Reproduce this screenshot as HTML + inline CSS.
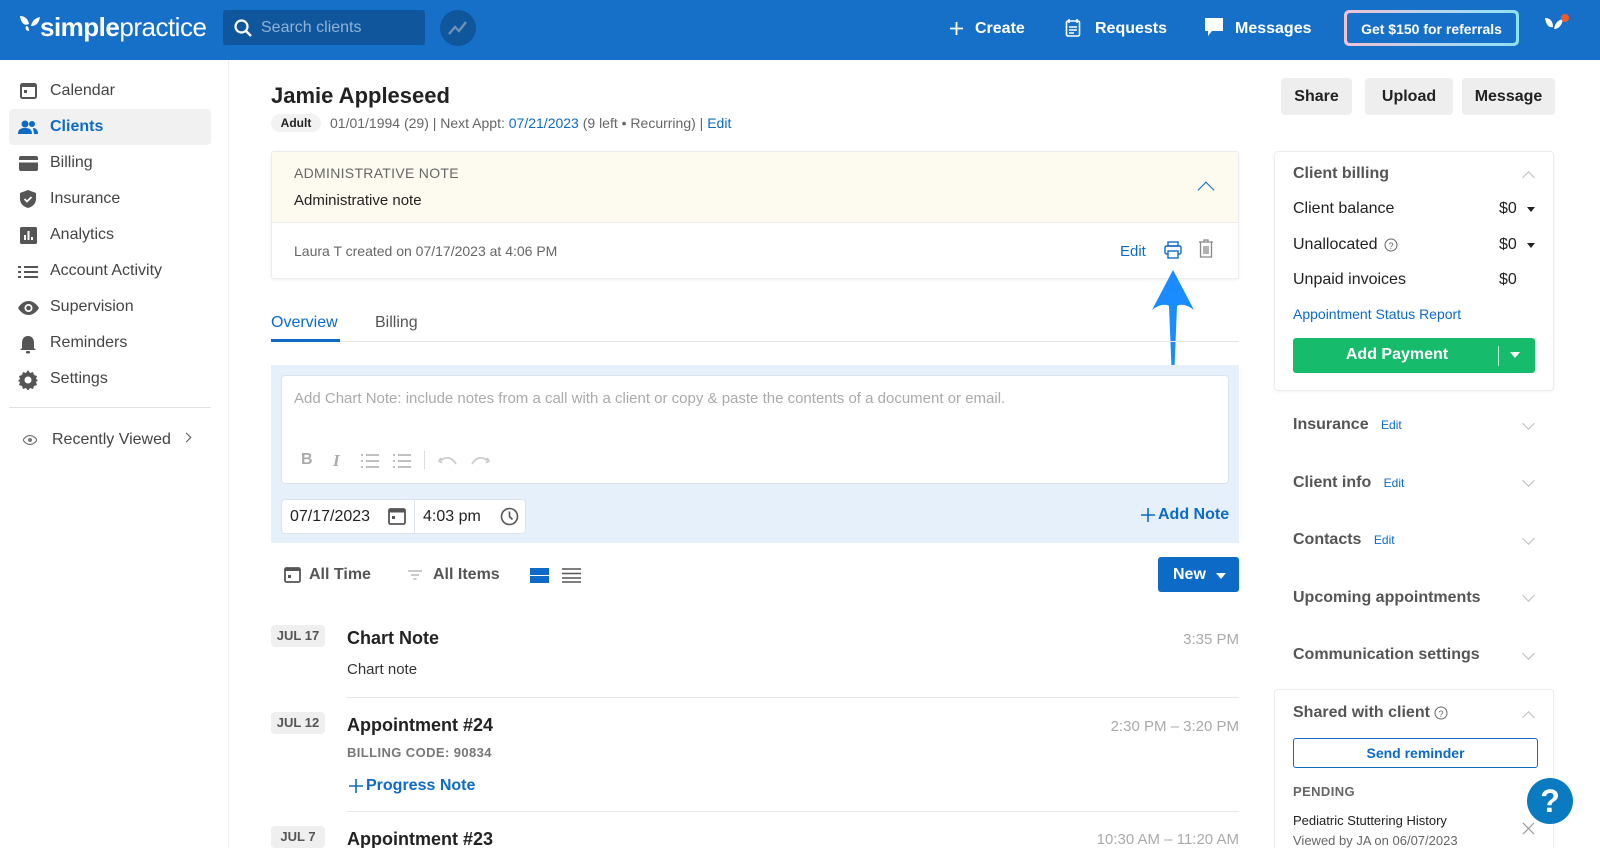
<!DOCTYPE html>
<html style="overflow:hidden;height:848px"><head><meta charset="utf-8"><style>
*{box-sizing:border-box;margin:0;padding:0}
body{width:1600px;height:848px;overflow:hidden;background:#fff;font-family:"Liberation Sans",sans-serif;color:#222;position:relative}
.a{position:absolute;white-space:nowrap}
.hdr{position:absolute;left:0;top:0;width:1600px;height:60px;background:#1670c7}
.w{color:#fff;font-weight:bold;font-size:16px}
.side{color:#444;font-size:16px}
.blue{color:#0d6bc7}
.btn{position:absolute;background:#eee;border-radius:4px;font-weight:bold;font-size:16px;color:#222;text-align:center;line-height:37px}
.rt{font-size:16px;font-weight:bold;color:#555}
.chev{position:absolute;width:9px;height:9px;border-right:1.5px solid #bbb;border-bottom:1.5px solid #bbb;transform:rotate(45deg)}
.chevu{position:absolute;width:9px;height:9px;border-left:1.5px solid #bbb;border-top:1.5px solid #bbb;transform:rotate(45deg)}
.badge{position:absolute;background:#efefef;border-radius:4px;color:#555;font-weight:bold;font-size:13px;text-align:center;line-height:22px;width:54px}
</style></head><body>
<div class="hdr"></div>
<svg class="a" style="left:18px;top:14px" width="24" height="20" viewBox="0 0 24 20"><path d="M2 2c5 0 8 3 9 8-4 2-8 0-9-8zM13 12c1-5 4-8 9-9-1 6-4 9-9 9z" fill="#fff"/><path d="M8 12c2 0 3 2 3 5-3 0-4-2-3-5z" fill="#fff"/></svg>
<div class="a" style="left:40px;top:12px;font-size:26px;color:#fff;letter-spacing:-0.5px"><b>simple</b>practice</div>
<div class="a" style="left:223px;top:10px;width:202px;height:35px;background:#0f569c;border-radius:3px"></div>
<svg class="a" style="left:234px;top:19px" width="18" height="18" viewBox="0 0 18 18"><circle cx="7.5" cy="7.5" r="6" fill="none" stroke="#fff" stroke-width="2.2"/><path d="M12 12l5 5" stroke="#fff" stroke-width="2.4"/></svg>
<div class="a" style="left:261px;top:19px;font-size:16px;color:#8fb2d6">Search clients</div>
<div class="a" style="left:440px;top:10px;width:36px;height:36px;border-radius:50%;background:#0f569c"></div>
<svg class="a" style="left:447px;top:18px" width="22" height="20"><path d="M2 16l6-7 4 4 7-9" fill="none" stroke="#6d92ba" stroke-width="2.4"/></svg>
<svg class="a" style="left:950px;top:22px" width="13" height="13"><path d="M6.5 0v13M0 6.5h13" stroke="#fff" stroke-width="1.8"/></svg>
<div class="a w" style="left:975px;top:20px">Create</div>
<svg class="a" style="left:1065px;top:18px" width="16" height="19"><rect x="1.5" y="3" width="13" height="15" rx="1.5" fill="none" stroke="#fff" stroke-width="1.6"/><path d="M4 1v4M12 1v4M4 9h8M4 12h8M4 15h5" stroke="#fff" stroke-width="1.5"/></svg>
<div class="a w" style="left:1095px;top:20px">Requests</div>
<svg class="a" style="left:1204px;top:17px" width="20" height="21"><path d="M1 1h18v13H8l-4 5v-5H1z" fill="#fff"/></svg>
<div class="a w" style="left:1235px;top:20px">Messages</div>
<div class="a" style="left:1344px;top:10px;width:175px;height:36px;border-radius:5px;background:linear-gradient(90deg,#f3c2cf,#b9d4ef,#8fe0f0)"></div>
<div class="a" style="left:1347px;top:13px;width:169px;height:30px;border-radius:3px;background:#1670c7"></div>
<div class="a" style="left:1344px;top:21px;width:175px;text-align:center;color:#fff;font-weight:bold;font-size:14px">Get $150 for referrals</div>
<svg class="a" style="left:1543px;top:14px" width="26" height="22"><path d="M2 4c5 0 8 3 8 9-4 1-7-2-8-9zM11 15c1-6 4-9 9-10-1 6-4 10-9 10z" fill="#fff"/><circle cx="22" cy="4" r="4" fill="#ef5a2a"/></svg>

<div class="a" style="left:228px;top:60px;width:1px;height:788px;background:#eceef0"></div>
<div class="a" style="left:9px;top:109px;width:202px;height:36px;background:#f1f1f1;border-radius:4px"></div>
<svg class="a" style="left:20px;top:83px" width="17" height="16"><rect x="1" y="1" width="15" height="14" rx="1.5" fill="none" stroke="#555" stroke-width="2"/><rect x="1" y="1" width="15" height="3" fill="#555"/><rect x="4" y="7" width="3" height="3" fill="#555"/></svg>
<div class="a side" style="left:50px;top:82px">Calendar</div>
<svg class="a" style="left:18px;top:120px" width="20" height="14"><circle cx="7" cy="4" r="3.5" fill="#0d6bc7"/><path d="M0 14c0-5 3-6 7-6s7 1 7 6z" fill="#0d6bc7"/><circle cx="14" cy="4" r="3" fill="#0d6bc7"/><path d="M15 8c3 0 5 2 5 6h-4z" fill="#0d6bc7"/></svg>
<div class="a side" style="left:50px;top:118px;color:#0d6bc7;font-weight:bold">Clients</div>
<svg class="a" style="left:19px;top:156px" width="19" height="15"><rect x="0" y="0" width="19" height="15" rx="2" fill="#555"/><rect x="0" y="4" width="19" height="2.5" fill="#fff"/></svg>
<div class="a side" style="left:50px;top:154px">Billing</div>
<svg class="a" style="left:20px;top:190px" width="16" height="18"><path d="M8 0l8 3v6c0 5-4 8-8 9-4-1-8-4-8-9V3z" fill="#555"/><path d="M4.5 9l2.5 2.5 4.5-4.5" stroke="#fff" stroke-width="1.8" fill="none"/></svg>
<div class="a side" style="left:50px;top:190px">Insurance</div>
<svg class="a" style="left:20px;top:227px" width="17" height="17"><rect width="17" height="17" rx="1.5" fill="#555"/><path d="M5 13V8M8.5 13V4M12 13v-3" stroke="#fff" stroke-width="2"/></svg>
<div class="a side" style="left:50px;top:226px">Analytics</div>
<svg class="a" style="left:18px;top:266px" width="20" height="12"><path d="M0 1h3M0 6h3M0 11h3M6 1h14M6 6h14M6 11h14" stroke="#555" stroke-width="2"/></svg>
<div class="a side" style="left:50px;top:262px">Account Activity</div>
<svg class="a" style="left:18px;top:301px" width="21" height="14"><path d="M0 7c3-5 7-7 10.5-7S18 2 21 7c-3 5-7 7-10.5 7S3 12 0 7z" fill="#555"/><circle cx="10.5" cy="7" r="4" fill="#fff"/><circle cx="10.5" cy="7" r="2.3" fill="#555"/></svg>
<div class="a side" style="left:50px;top:298px">Supervision</div>
<svg class="a" style="left:20px;top:335px" width="16" height="19"><path d="M8 1c4 0 6 3 6 7v5l2 2H0l2-2V8c0-4 2-7 6-7z" fill="#555"/><rect x="6" y="16" width="4" height="2.5" rx="1" fill="#555"/></svg>
<div class="a side" style="left:50px;top:334px">Reminders</div>
<svg class="a" style="left:18px;top:370px" width="20" height="20" viewBox="0 0 20 20"><path d="M10 0l2 3 3-1 1 3 3 1-1 3 2 1-2 2 1 3-3 1-1 3-3-1-2 3-2-3-3 1-1-3-3-1 1-3-2-1 2-2-1-3 3-1 1-3 3 1z" fill="#555"/><circle cx="10" cy="10" r="3.5" fill="#fff"/></svg>
<div class="a side" style="left:50px;top:370px">Settings</div>
<div class="a" style="left:9px;top:407px;width:202px;height:1px;background:#e2e2e2"></div>
<svg class="a" style="left:23px;top:435px" width="14" height="10"><path d="M0 5c2-3 4.5-4.5 7-4.5S12 2 14 5c-2 3-4.5 4.5-7 4.5S2 8 0 5z" fill="none" stroke="#777" stroke-width="1.2"/><circle cx="7" cy="5" r="2" fill="#777"/></svg>
<div class="a side" style="left:52px;top:431px">Recently Viewed</div>
<div class="a" style="left:183px;top:434px;width:7px;height:7px;border-right:1.5px solid #555;border-top:1.5px solid #555;transform:rotate(45deg)"></div>

<div class="a" style="left:271px;top:83px;font-size:22px;font-weight:bold;color:#222">Jamie Appleseed</div>
<div class="a" style="left:271px;top:114px;width:50px;height:18px;border-radius:9px;background:#f2f2f2;font-size:12px;font-weight:bold;text-align:center;line-height:18px">Adult</div>
<div class="a" style="left:330px;top:115px;font-size:14px;color:#666">01/01/1994 (29) | Next Appt: <span class="blue">07/21/2023</span> (9 left • Recurring) | <span class="blue">Edit</span></div>
<div class="btn" style="left:1281px;top:78px;width:71px">Share</div>
<div class="btn" style="left:1365px;top:78px;width:88px">Upload</div>
<div class="btn" style="left:1462px;top:78px;width:93px">Message</div>

<div class="a" style="left:271px;top:151px;width:968px;height:128px;border:1px solid #ececec;border-radius:3px;box-shadow:0 1px 3px rgba(0,0,0,.06)"></div>
<div class="a" style="left:272px;top:152px;width:966px;height:71px;background:#fdfaf0;border-bottom:1px solid #ececec"></div>
<div class="a" style="left:294px;top:165px;font-size:14px;color:#666;letter-spacing:.3px">ADMINISTRATIVE NOTE</div>
<div class="a" style="left:294px;top:192px;font-size:15px;color:#222">Administrative note</div>
<div class="a" style="left:1200px;top:184px;width:12px;height:12px;border-left:1.5px solid #0d6bc7;border-top:1.5px solid #0d6bc7;transform:rotate(45deg)"></div>
<div class="a" style="left:294px;top:243px;font-size:14px;color:#666">Laura T created on 07/17/2023 at 4:06 PM</div>
<div class="a blue" style="left:1120px;top:243px;font-size:15px">Edit</div>
<svg class="a" style="left:1164px;top:241px" width="18" height="18"><rect x="4" y="1" width="10" height="4" fill="none" stroke="#0d6bc7" stroke-width="1.4"/><rect x="1" y="5" width="16" height="8" rx="1.5" fill="none" stroke="#0d6bc7" stroke-width="1.4"/><rect x="4" y="10" width="10" height="7" fill="#fff" stroke="#0d6bc7" stroke-width="1.4"/></svg>
<svg class="a" style="left:1198px;top:239px" width="16" height="19"><path d="M1 3h14M6 3V1h4v2M2.5 3v15h11V3M6 7v8M8 7v8M10 7v8" fill="none" stroke="#888" stroke-width="1.3"/></svg>

<svg class="a" style="left:1150px;top:268px" width="46" height="115"><path d="M23 2L44 42C36 36 30 36 27 38L24 112h-2L19 38C16 36 10 36 2 42z" fill="#1a8cff"/></svg>

<div class="a" style="left:271px;top:314px;font-size:16px;color:#0d6bc7">Overview</div>
<div class="a" style="left:375px;top:314px;font-size:16px;color:#555">Billing</div>
<div class="a" style="left:271px;top:341px;width:968px;height:1px;background:#e6e6e6"></div>
<div class="a" style="left:271px;top:339px;width:69px;height:3px;background:#0d6bc7"></div>

<div class="a" style="left:271px;top:365px;width:968px;height:178px;background:#e6f0fa"></div>
<div class="a" style="left:281px;top:375px;width:948px;height:109px;background:#fff;border:1px solid #dde3ea;border-radius:4px"></div>
<div class="a" style="left:294px;top:390px;font-size:15px;color:#aaa">Add Chart Note: include notes from a call with a client or copy &amp; paste the contents of a document or email.</div>
<div class="a" style="left:301px;top:451px;font-size:16px;color:#aaa;font-weight:bold">B</div>
<div class="a" style="left:333px;top:451px;font-size:17px;color:#aaa;font-style:italic;font-weight:bold;font-family:'Liberation Serif',serif">I</div>
<svg class="a" style="left:361px;top:454px" width="18" height="14"><path d="M0 1h2M0 7h2M0 13h2M5 1h13M5 7h13M5 13h13" stroke="#aaa" stroke-width="1.6"/></svg>
<svg class="a" style="left:393px;top:454px" width="18" height="14"><path d="M5 1h13M5 7h13M5 13h13M0 1h2M0 7h2M0 13h2" stroke="#aaa" stroke-width="1.4"/></svg>
<div class="a" style="left:424px;top:451px;width:1px;height:18px;background:#ddd"></div>
<svg class="a" style="left:438px;top:455px" width="52" height="12"><path d="M3 3l-2 3 3 2M2 6c6-5 12-4 16 3" fill="none" stroke="#ccc" stroke-width="1.8"/><path d="M49 3l2 3-3 2M50 6c-6-5-12-4-16 3" fill="none" stroke="#ccc" stroke-width="1.8"/></svg>
<div class="a" style="left:281px;top:499px;width:245px;height:35px;background:#fff;border:1px solid #dde3ea;border-radius:4px"></div>
<div class="a" style="left:414px;top:499px;width:1px;height:35px;background:#dde3ea"></div>
<div class="a" style="left:290px;top:508px;font-size:16px">07/17/2023</div>
<svg class="a" style="left:388px;top:508px" width="18" height="17"><rect x="1" y="1" width="16" height="15" rx="1.5" fill="none" stroke="#555" stroke-width="1.8"/><rect x="1" y="1" width="16" height="3.5" fill="#555"/><rect x="4" y="8" width="3" height="3" fill="#555"/></svg>
<div class="a" style="left:423px;top:508px;font-size:16px">4:03 pm</div>
<svg class="a" style="left:500px;top:507px" width="19" height="19"><circle cx="9.5" cy="9.5" r="8" fill="none" stroke="#555" stroke-width="1.6"/><path d="M9.5 4.5v5l3 3" fill="none" stroke="#555" stroke-width="1.6"/></svg>
<svg class="a" style="left:1141px;top:508px" width="14" height="14"><path d="M7 0v14M0 7h14" stroke="#0d6bc7" stroke-width="1.6"/></svg>
<div class="a blue" style="left:1158px;top:506px;font-size:16px;font-weight:bold">Add Note</div>

<svg class="a" style="left:284px;top:567px" width="17" height="16"><rect x="1" y="1" width="15" height="14" rx="1.5" fill="none" stroke="#555" stroke-width="1.8"/><rect x="1" y="1" width="15" height="3" fill="#555"/><rect x="4" y="8" width="3" height="3" fill="#555"/></svg>
<div class="a" style="left:309px;top:566px;font-size:16px;font-weight:bold;color:#555">All Time</div>
<svg class="a" style="left:408px;top:570px" width="14" height="10"><path d="M0 1h14M3 5h8M5.5 9h3" stroke="#aaa" stroke-width="1.3"/></svg>
<div class="a" style="left:433px;top:566px;font-size:16px;font-weight:bold;color:#555">All Items</div>
<div class="a" style="left:530px;top:568px;width:19px;height:7px;background:#0d6bc7"></div>
<div class="a" style="left:530px;top:576px;width:19px;height:7px;background:#0d6bc7"></div>
<svg class="a" style="left:562px;top:568px" width="19" height="15"><path d="M0 1h19M0 5.5h19M0 10h19M0 14h19" stroke="#555" stroke-width="1.5"/></svg>
<div class="a" style="left:1158px;top:557px;width:81px;height:35px;background:#0d6bc7;border-radius:3px"></div>
<div class="a" style="left:1173px;top:566px;font-size:16px;font-weight:bold;color:#fff">New</div>
<div class="a" style="left:1216px;top:573px;border:5px solid transparent;border-top:6px solid #fff"></div>

<div class="badge" style="left:271px;top:625px">JUL 17</div>
<div class="a" style="left:347px;top:628px;font-size:18px;font-weight:bold;color:#222">Chart Note</div>
<div class="a" style="left:347px;top:661px;font-size:15px;color:#333">Chart note</div>
<div class="a" style="right:361px;top:631px;font-size:15px;color:#aaa">3:35 PM</div>
<div class="a" style="left:347px;top:697px;width:892px;height:1px;background:#e8e8e8"></div>
<div class="badge" style="left:271px;top:712px">JUL 12</div>
<div class="a" style="left:347px;top:715px;font-size:18px;font-weight:bold;color:#222">Appointment #24</div>
<div class="a" style="left:347px;top:745px;font-size:13px;font-weight:bold;color:#777;letter-spacing:.4px">BILLING CODE: 90834</div>
<svg class="a" style="left:349px;top:779px" width="14" height="14"><path d="M7 0v14M0 7h14" stroke="#0d6bc7" stroke-width="1.6"/></svg>
<div class="a blue" style="left:366px;top:777px;font-size:16px;font-weight:bold">Progress Note</div>
<div class="a" style="right:361px;top:718px;font-size:15px;color:#aaa">2:30 PM – 3:20 PM</div>
<div class="a" style="left:347px;top:811px;width:892px;height:1px;background:#e8e8e8"></div>
<div class="badge" style="left:271px;top:826px">JUL 7</div>
<div class="a" style="left:347px;top:829px;font-size:18px;font-weight:bold;color:#222">Appointment #23</div>
<div class="a" style="right:361px;top:831px;font-size:15px;color:#aaa">10:30 AM – 11:20 AM</div>

<div class="a" style="left:1274px;top:151px;width:280px;height:240px;border:1px solid #ececec;border-radius:4px;box-shadow:0 1px 3px rgba(0,0,0,.05)"></div>
<div class="a rt" style="left:1293px;top:165px">Client billing</div>
<div class="chevu" style="left:1524px;top:173px"></div>
<div class="a" style="left:1293px;top:200px;font-size:16px">Client balance</div>
<div class="a" style="left:1499px;top:200px;font-size:16px">$0</div>
<div class="a" style="left:1527px;top:207px;border:4.5px solid transparent;border-top:5px solid #222"></div>
<div class="a" style="left:1293px;top:236px;font-size:16px">Unallocated</div>
<svg class="a" style="left:1384px;top:238px" width="14" height="14"><circle cx="7" cy="7" r="6" fill="none" stroke="#666" stroke-width="1"/><text x="7" y="11" font-size="9" text-anchor="middle" fill="#666" font-family="Liberation Sans">?</text></svg>
<div class="a" style="left:1499px;top:236px;font-size:16px">$0</div>
<div class="a" style="left:1527px;top:243px;border:4.5px solid transparent;border-top:5px solid #222"></div>
<div class="a" style="left:1293px;top:271px;font-size:16px">Unpaid invoices</div>
<div class="a" style="left:1499px;top:271px;font-size:16px">$0</div>
<div class="a blue" style="left:1293px;top:306px;font-size:14px">Appointment Status Report</div>
<div class="a" style="left:1293px;top:338px;width:242px;height:35px;background:#16bb6b;border-radius:3px"></div>
<div class="a" style="left:1293px;top:346px;width:208px;text-align:center;font-size:16px;font-weight:bold;color:#fff">Add Payment</div>
<div class="a" style="left:1498px;top:346px;width:1px;height:20px;background:#bfeed6"></div>
<div class="a" style="left:1510px;top:352px;border:5px solid transparent;border-top:6px solid #fff"></div>

<div class="a rt" style="left:1293px;top:416px">Insurance <span class="blue" style="font-size:12px;font-weight:normal;margin-left:8px">Edit</span></div>
<div class="chev" style="left:1524px;top:419px"></div>
<div class="a rt" style="left:1293px;top:474px">Client info <span class="blue" style="font-size:12px;font-weight:normal;margin-left:8px">Edit</span></div>
<div class="chev" style="left:1524px;top:476px"></div>
<div class="a rt" style="left:1293px;top:531px">Contacts <span class="blue" style="font-size:12px;font-weight:normal;margin-left:8px">Edit</span></div>
<div class="chev" style="left:1524px;top:534px"></div>
<div class="a rt" style="left:1293px;top:589px">Upcoming appointments</div>
<div class="chev" style="left:1524px;top:591px"></div>
<div class="a rt" style="left:1293px;top:646px">Communication settings</div>
<div class="chev" style="left:1524px;top:649px"></div>

<div class="a" style="left:1274px;top:689px;width:280px;height:159px;border:1px solid #ececec;border-bottom:none;border-radius:4px 4px 0 0"></div>
<div class="a rt" style="left:1293px;top:704px">Shared with client</div>
<svg class="a" style="left:1434px;top:706px" width="14" height="14"><circle cx="7" cy="7" r="6" fill="none" stroke="#666" stroke-width="1"/><text x="7" y="11" font-size="9" text-anchor="middle" fill="#666" font-family="Liberation Sans">?</text></svg>
<div class="chevu" style="left:1524px;top:713px"></div>
<div class="a" style="left:1293px;top:738px;width:245px;height:30px;border:1px solid #0d6bc7;border-radius:3px;text-align:center;line-height:28px;font-size:14px;font-weight:bold;color:#0d6bc7">Send reminder</div>
<div class="a" style="left:1293px;top:784px;font-size:13px;font-weight:bold;color:#666;letter-spacing:.4px">PENDING</div>
<div class="a" style="left:1293px;top:813px;font-size:13px;color:#222">Pediatric Stuttering History</div>
<div class="a" style="left:1293px;top:833px;font-size:13px;color:#666">Viewed by JA on 06/07/2023</div>
<svg class="a" style="left:1522px;top:822px" width="13" height="13"><path d="M1 1l11 11M12 1L1 12" stroke="#999" stroke-width="1.2"/></svg>
<div class="a" style="left:1527px;top:778px;width:46px;height:46px;border-radius:50%;background:#0b7bc1;color:#fff;font-size:32px;font-weight:bold;text-align:center;line-height:46px">?</div>
</body></html>
